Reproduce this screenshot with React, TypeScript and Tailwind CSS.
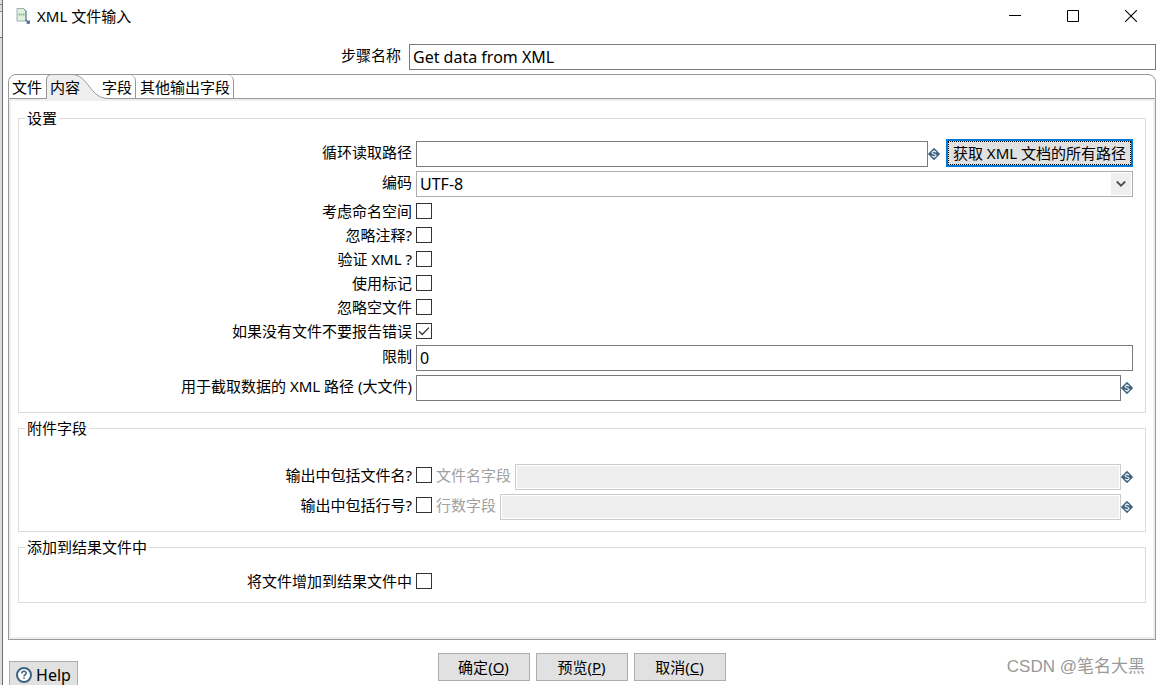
import { useState } from "react";
import type { ReactNode } from "react";

const inputClass =
  "h-[26px] min-w-0 flex-1 border border-[#7a7a7a] bg-white px-[3px] text-base outline-none";
const disabledClass =
  "h-[26px] min-w-0 flex-1 border border-[#cccccc] bg-[#efefef] px-[3px] shadow-[inset_0_0_0_1px_#ffffff] outline-none";

const options = [
  { id: "namespace", label: "考虑命名空间" },
  { id: "comments", label: "忽略注释?" },
  { id: "validate", label: "验证 XML ?" },
  { id: "token", label: "使用标记" },
  { id: "empty", label: "忽略空文件" },
  { id: "missing", label: "如果没有文件不要报告错误", checked: true },
];

const extraFields = [
  { id: "filename", label: "输出中包括文件名?", fieldLabel: "文件名字段" },
  { id: "rownum", label: "输出中包括行号?", fieldLabel: "行数字段" },
];

const actions = [
  { text: "确定", hotkey: "O" },
  { text: "预览", hotkey: "P" },
  { text: "取消", hotkey: "C" },
];

function VariableIcon() {
  return (
    <svg className="h-3 w-3 shrink-0" viewBox="0 0 12 12" aria-hidden="true">
      <path
        d="M6 0.8 11.2 6 6 11.2 0.8 6Z"
        fill="#3d6480"
        stroke="#3d6480"
        strokeWidth="1.4"
        strokeLinejoin="round"
      />
      <path
        d="M8 4.4C7.7 3.6 6.9 3.3 6 3.3 4.9 3.3 4 3.8 4 4.6 4 6.4 8 5.6 8 7.4 8 8.2 7.1 8.7 6 8.7 5 8.7 4.2 8.4 3.9 7.6M6 2V3.3M6 8.7V10"
        fill="none"
        stroke="#dfe8ee"
        strokeWidth="1.2"
      />
    </svg>
  );
}

function CheckBox({ id, checked = false }: { id: string; checked?: boolean }) {
  const [on, setOn] = useState(checked);
  return (
    <span className="relative flex h-4 w-4 shrink-0">
      <input
        id={id}
        type="checkbox"
        checked={on}
        onChange={() => setOn(!on)}
        className="h-4 w-4 appearance-none border border-[#333333] bg-white"
      />
      {on && (
        <svg
          className="pointer-events-none absolute inset-0 h-4 w-4"
          viewBox="0 0 16 16"
          fill="none"
          stroke="#333333"
          strokeWidth="1.3"
        >
          <path d="M3 8.3 6.2 11.5 13 4.6" />
        </svg>
      )}
    </span>
  );
}

function Group({ title, children }: { title: string; children: ReactNode }) {
  return (
    <fieldset className="min-w-0 border border-[#dcdcdc] pr-3 pb-[9px]">
      <legend className="ml-1.5 h-5 px-0.5 leading-5">{title}</legend>
      {children}
    </fieldset>
  );
}

function Row({
  id,
  label,
  children,
}: {
  id: string;
  label: string;
  children: ReactNode;
}) {
  return (
    <div className="flex h-[30px] items-center">
      <label
        htmlFor={id}
        className="mr-1 w-[393px] shrink-0 pb-1 text-right leading-[22px]"
      >
        {label}
      </label>
      {children}
    </div>
  );
}

function CheckRow({
  id,
  label,
  checked,
}: {
  id: string;
  label: string;
  checked?: boolean;
}) {
  return (
    <div className="flex h-6 items-center">
      <label htmlFor={id} className="mr-1 w-[393px] shrink-0 text-right">
        {label}
      </label>
      <CheckBox id={id} checked={checked} />
    </div>
  );
}

function TitleBar() {
  return (
    <header className="flex h-8 shrink-0 items-center">
      <svg className="ml-3 h-4 w-4" viewBox="0 0 16 16" aria-hidden="true">
        <path
          d="M2 0.5H8.5L11 3V13H2Z"
          fill="#dff0dc"
          stroke="#9ab0b8"
        />
        <path d="M8.5 0.5 11 3V13" fill="none" stroke="#5f8296" />
        <path d="M3.5 6.5H9.5" stroke="#8fb79a" strokeWidth="2" strokeDasharray="1.6 0.6" />
        <path
          d="M11 12 14 15M14.2 12.5V15.2H11.5"
          fill="none"
          stroke="#3d6480"
          strokeWidth="1.3"
        />
      </svg>
      <h1 className="ml-1.5 flex-1">XML 文件输入</h1>
      <button aria-label="最小化" className="flex w-[58px] justify-center">
        <svg width="12" height="12" viewBox="0 0 12 12" stroke="#000000">
          <path d="M0 5.5H12" />
        </svg>
      </button>
      <button aria-label="最大化" className="flex w-[58px] justify-center">
        <svg width="12" height="12" viewBox="0 0 12 12" stroke="#000000">
          <path d="M0.5 0.5H11.5V11.5H0.5Z" fill="none" />
        </svg>
      </button>
      <button aria-label="关闭" className="flex w-[58px] justify-center">
        <svg width="12" height="12" viewBox="0 0 12 12" stroke="#000000">
          <path d="M0 0 12 12M12 0 0 12" strokeWidth="1.1" />
        </svg>
      </button>
    </header>
  );
}

function TabBar() {
  return (
    <div
      role="tablist"
      className="flex h-[25px] rounded-t-lg border border-[#999999]"
    >
      <button role="tab" className="w-[37px] pl-[3px] text-left">
        文件
      </button>
      <div className="relative flex w-[53px]">
        <svg
          className="absolute -top-px left-0 h-[25px] w-[66px]"
          viewBox="0 0 66 25"
          aria-hidden="true"
        >
          <path
            d="M0.5 25V6Q0.5 0.5 6 0.5H26C42 0.5 44 24.5 62 24.5V25Z"
            fill="#efefef"
          />
          <path
            d="M0.5 25V6Q0.5 0.5 6 0.5H26C42 0.5 44 24.5 62 24.5"
            fill="none"
            stroke="#999999"
          />
        </svg>
        <button role="tab" aria-selected="true" className="relative pl-1">
          内容
        </button>
      </div>
      <button
        role="tab"
        className="relative w-[37px] rounded-tr-md border-r border-[#999999] pr-[3px] text-right"
      >
        字段
      </button>
      <button
        role="tab"
        className="w-[98px] rounded-tr-md border-r border-[#999999] pl-1 text-left"
      >
        其他输出字段
      </button>
    </div>
  );
}

export default function App() {
  return (
    <div className="flex h-screen overflow-hidden bg-white font-['Noto_Sans','Noto_Sans_CJK_SC',sans-serif] text-[15px] leading-5 text-black">
      <div className="w-[3px] shrink-0 border-r border-[#6e6e6e] bg-[#dcdcdc]">
        <div className="h-[5px] border-b border-[#8a8a8a]" />
        <div className="h-[7px] border-b border-[#8a8a8a]" />
        <div className="h-[26px] border-b border-[#6e6e6e] bg-[#efefef]" />
      </div>

      <div className="flex min-w-0 flex-1 flex-col">
        <TitleBar />

        <div className="mt-3 mr-1 flex shrink-0">
          <label
            htmlFor="step"
            className="mr-2 w-[398px] shrink-0 text-right leading-[22px]"
          >
            步骤名称
          </label>
          <input id="step" defaultValue="Get data from XML" className={inputClass} />
        </div>

        <main className="mt-1 mr-1 ml-[5px] shrink-0">
          <TabBar />
          <div className="border border-t-0 border-[#999999]">
            <div className="flex flex-col gap-[5px] border-2 border-[#efefef] px-[7px] pt-[7px] pb-[34px]">
              <Group title="设置">
                <div className="pt-[11px]">
                  <Row id="loop" label="循环读取路径">
                    <input id="loop" className={inputClass} />
                    <VariableIcon />
                    <button className="ml-1.5 h-7 w-[187px] shrink-0 self-start border-2 border-[#0078d7] bg-[#e1e1e1]">
                      <span className="flex h-6 items-center justify-center border border-dotted border-black whitespace-nowrap">
                        获取 XML 文档的所有路径
                      </span>
                    </button>
                  </Row>
                  <Row id="encoding" label="编码">
                    <div className="relative flex min-w-0 flex-1">
                      <select
                        id="encoding"
                        className="h-[26px] w-full appearance-none border border-[#adadad] bg-white px-[3px] text-base leading-6 outline-none"
                      >
                        <option>UTF-8</option>
                      </select>
                      <span className="pointer-events-none absolute top-0.5 right-0.5 flex h-[22px] w-5 items-center justify-center bg-[#efefef]">
                        <svg
                          width="10"
                          height="8"
                          viewBox="0 0 10 8"
                          fill="none"
                          stroke="#505050"
                          strokeWidth="1.8"
                        >
                          <path d="M0.8 1.5 5 5.7 9.2 1.5" />
                        </svg>
                      </span>
                    </div>
                  </Row>
                  {options.map((option) => (
                    <CheckRow key={option.id} {...option} />
                  ))}
                  <Row id="limit" label="限制">
                    <input id="limit" defaultValue="0" className={inputClass} />
                  </Row>
                  <Row id="prune" label="用于截取数据的 XML 路径 (大文件)">
                    <input id="prune" className={inputClass} />
                    <VariableIcon />
                  </Row>
                </div>
              </Group>

              <Group title="附件字段">
                <div className="pt-6">
                  {extraFields.map(({ id, label, fieldLabel }) => (
                    <Row key={id} id={id} label={label}>
                      <div className="pb-1">
                        <CheckBox id={id} />
                      </div>
                      <label
                        htmlFor={`${id}-field`}
                        className="mx-1 pb-1 leading-[22px] text-[#a0a0a0]"
                      >
                        {fieldLabel}
                      </label>
                      <input id={`${id}-field`} disabled className={disabledClass} />
                      <VariableIcon />
                    </Row>
                  ))}
                </div>
              </Group>

              <Group title="添加到结果文件中">
                <div className="pt-3">
                  <CheckRow id="result" label="将文件增加到结果文件中" />
                </div>
              </Group>
            </div>
          </div>
        </main>

        <footer className="mt-[13px] grid shrink-0 grid-cols-[1fr_auto_1fr]">
          <button className="mt-2 ml-1.5 flex h-7 w-[69px] items-center justify-center gap-1 border border-[#adadad] bg-[#e1e1e1] text-base">
            <svg
              className="h-4 w-4"
              viewBox="0 0 16 16"
              fill="none"
              stroke="#3d6480"
              aria-hidden="true"
            >
              <circle cx="8" cy="8" r="7" fill="#ffffff" strokeWidth="2" />
              <path
                d="M5.8 6.4C5.8 3.7 10.2 3.7 10.2 6.2 10.2 7.7 8 7.7 8 9.4M8 10.6V12"
                strokeWidth="1.5"
              />
            </svg>
            Help
          </button>
          <div className="flex gap-1.5">
            {actions.map(({ text, hotkey }) => (
              <button
                key={hotkey}
                className="h-7 w-[92px] border border-[#adadad] bg-[#e1e1e1]"
              >
                {text}(<u>{hotkey}</u>)
              </button>
            ))}
          </div>
          <p className="mt-1 mr-[15px] text-right font-['Liberation_Sans','Noto_Sans_CJK_SC',sans-serif] text-[17px] text-[#999999]">
            CSDN @笔名大黑
          </p>
        </footer>
      </div>
    </div>
  );
}
